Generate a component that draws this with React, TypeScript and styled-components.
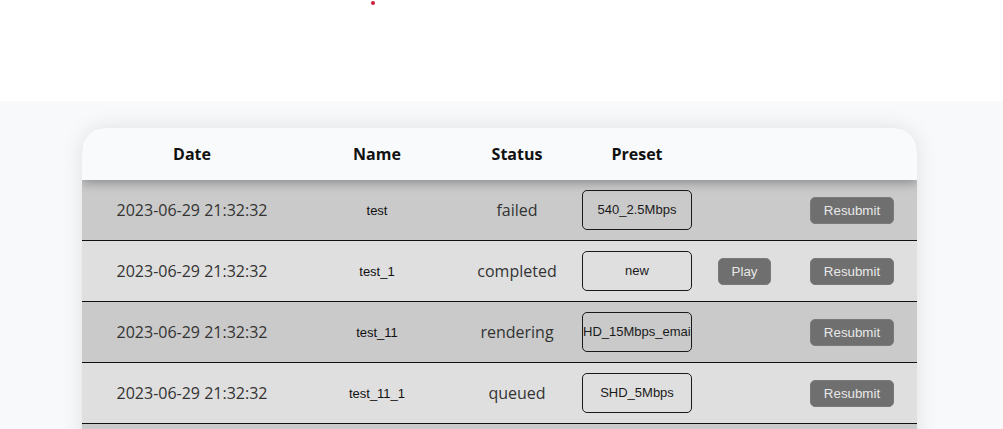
import styled, { createGlobalStyle } from 'styled-components';

interface Job {
  id: string;
  date: string;
  name: string;
  status: string;
  preset: string;
  playable: boolean;
}

const JOBS: Job[] = [
  { id: '1', date: '2023-06-29 21:32:32', name: 'test', status: 'failed', preset: '540_2.5Mbps', playable: false },
  { id: '2', date: '2023-06-29 21:32:32', name: 'test_1', status: 'completed', preset: 'new', playable: true },
  { id: '3', date: '2023-06-29 21:32:32', name: 'test_11', status: 'rendering', preset: 'HD_15Mbps_email', playable: false },
  { id: '4', date: '2023-06-29 21:32:32', name: 'test_11_1', status: 'queued', preset: 'SHD_5Mbps', playable: false },
  { id: '5', date: '2023-06-29 21:32:32', name: 'test_2', status: 'queued', preset: 'new', playable: false },
];

const COLUMNS = '220px 150px 130px 110px 105px 1fr';

const GlobalStyle = createGlobalStyle`
  html, body {
    margin: 0;
    padding: 0;
    background: #ffffff;
    overflow: hidden;
  }
`;

const TopBar = styled.header`
  display: flow-root;
  height: 101px;
  background: #ffffff;
`;

const Loader = styled.div`
  width: 4px;
  height: 4px;
  margin: 1px 0 0 371px;
  border-radius: 50%;
  background: #cc1f3a;
`;

const Section = styled.main`
  background: #f8f9fb;
  padding: 27px 0 0 82px;
  min-height: 400px;
`;

const Card = styled.div`
  width: 835px;
  border-radius: 24px 24px 0 0;
  overflow: hidden;
  box-shadow: 0 0 22px rgba(0, 0, 0, 0.1);
`;

const HeaderRow = styled.div`
  position: relative;
  z-index: 1;
  display: grid;
  grid-template-columns: ${COLUMNS};
  align-items: center;
  height: 52px;
  background: #f9fafb;
  box-shadow: 0 3px 10px rgba(0, 0, 0, 0.3);
  font-family: 'Open Sans', sans-serif;
  font-weight: 700;
  font-size: 16px;
  color: #111111;
`;

const HeadCell = styled.div`
  text-align: center;
`;

const Row = styled.div<{ $odd: boolean }>`
  display: grid;
  grid-template-columns: ${COLUMNS};
  align-items: center;
  height: 60px;
  border-bottom: 1px solid #111111;
  background: ${(p) => (p.$odd ? '#cacaca' : '#dfdfdf')};
`;

const TextCell = styled.div`
  text-align: center;
  font-family: 'Open Sans', sans-serif;
  font-size: 16px;
  color: #333333;
`;

const NameCell = styled.div`
  text-align: center;
  font-family: 'Liberation Sans', Arial, sans-serif;
  font-size: 13px;
  color: #111111;
`;

const PresetBox = styled.div`
  box-sizing: border-box;
  width: 110px;
  height: 40px;
  border: 1px solid #1a1a1a;
  border-radius: 5px;
  overflow: hidden;
  white-space: nowrap;
  text-align: center;
  line-height: 38px;
  font-family: 'Liberation Sans', Arial, sans-serif;
  font-size: 13px;
  color: #1a1a1a;
`;

const ActionCell = styled.div<{ $right?: boolean }>`
  display: flex;
  justify-content: center;
  padding-right: ${(p) => (p.$right ? '10px' : '0')};
`;

const ActionButton = styled.button`
  height: 27px;
  padding: 0 13px;
  border: 1px solid #7a7a7a;
  border-radius: 5px;
  background: #6f6f6f;
  color: #e8e8e8;
  font-family: 'Liberation Sans', Arial, sans-serif;
  font-size: 13.333px;
  cursor: pointer;
`;

export default function App() {
  return (
    <>
      <GlobalStyle />
      <TopBar>
        <Loader />
      </TopBar>
      <Section>
        <Card>
          <HeaderRow>
            <HeadCell>Date</HeadCell>
            <HeadCell>Name</HeadCell>
            <HeadCell>Status</HeadCell>
            <HeadCell>Preset</HeadCell>
            <HeadCell />
            <HeadCell />
          </HeaderRow>
          {JOBS.map((job, i) => (
            <Row key={job.id} $odd={i % 2 === 0}>
              <TextCell>{job.date}</TextCell>
              <NameCell>{job.name}</NameCell>
              <TextCell>{job.status}</TextCell>
              <PresetBox>{job.preset}</PresetBox>
              <ActionCell>{job.playable && <ActionButton>Play</ActionButton>}</ActionCell>
              <ActionCell $right>
                <ActionButton>Resubmit</ActionButton>
              </ActionCell>
            </Row>
          ))}
        </Card>
      </Section>
    </>
  );
}
